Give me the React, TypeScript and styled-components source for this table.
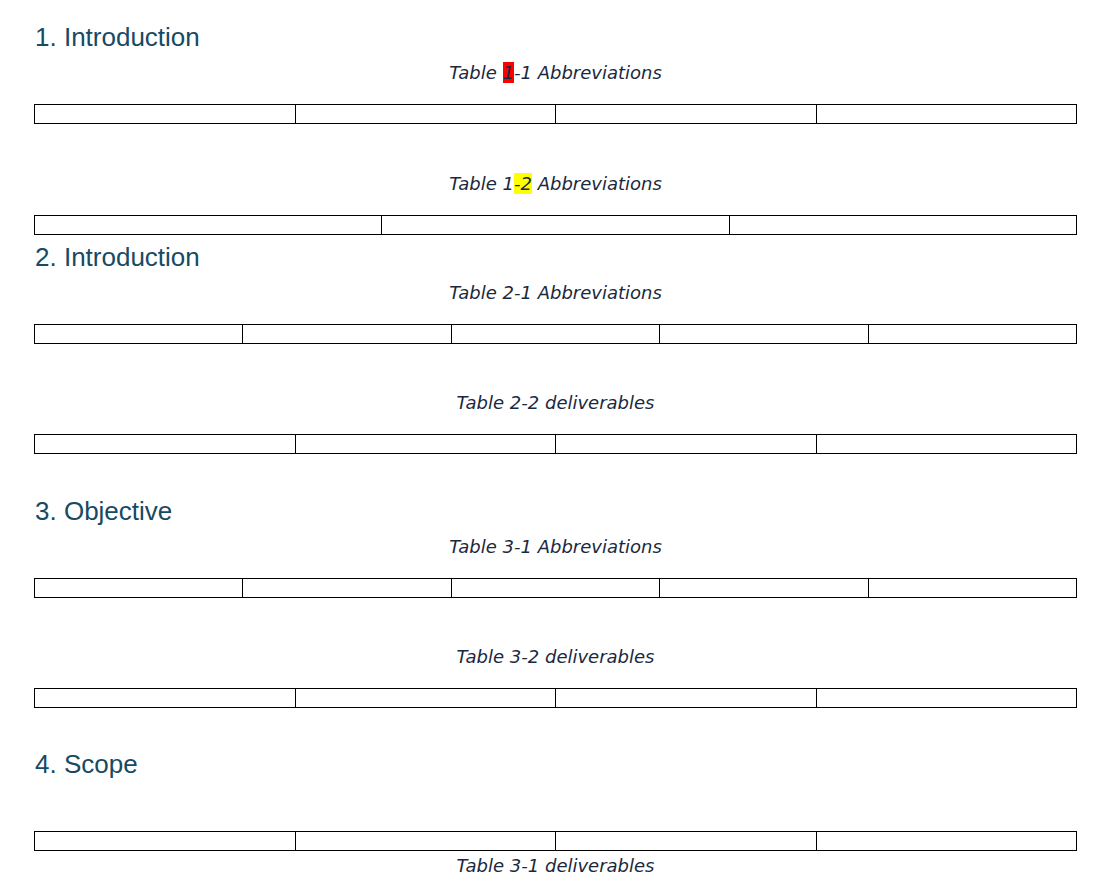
import React from "react";
import styled, { createGlobalStyle } from "styled-components";

const Global = createGlobalStyle`
  html, body { margin: 0; padding: 0; background: #ffffff; }
  body { overflow: hidden; }
`;

const Page = styled.div`
  width: 1043px;
  padding: 22px 0 0 34px;
  display: flex;
  flex-direction: column;
`;

const Heading = styled.h2<{ $top: number }>`
  margin: ${(p) => p.$top}px 0 0 1px;
  font-family: "Liberation Sans", Arial, sans-serif;
  font-weight: 400;
  font-size: 26px;
  line-height: 30px;
  height: 30px;
  color: #174a63;
`;

const Caption = styled.p<{ $top: number }>`
  margin: ${(p) => p.$top}px 0 0 0;
  font-family: "DejaVu Sans", "Liberation Sans", sans-serif;
  font-style: italic;
  font-size: 18px;
  line-height: 22px;
  height: 22px;
  text-align: center;
  color: #1a2940;
`;

const Mark = styled.span<{ $color: string }>`
  background: ${(p) => p.$color};
`;

const Grid = styled.div<{ $cols: number; $top: number }>`
  box-sizing: border-box;
  width: 1043px;
  margin-top: ${(p) => p.$top}px;
  display: grid;
  grid-template-columns: repeat(${(p) => p.$cols}, 1fr);
  border-top: 1px solid #000;
  border-left: 1px solid #000;
`;

const Cell = styled.div`
  height: 18px;
  border-right: 1px solid #000;
  border-bottom: 1px solid #000;
`;

const Table = ({ cols, top }: { cols: number; top: number }) => (
  <Grid $cols={cols} $top={top}>
    {Array.from({ length: cols }).map((_, i) => (
      <Cell key={i} />
    ))}
  </Grid>
);

export default function App() {
  return (
    <>
      <Global />
      <Page>
        <Heading $top={0}>1. Introduction</Heading>
        <Caption $top={10}>
          Table <Mark $color="#ff0000">1</Mark>-1 Abbreviations
        </Caption>
        <Table cols={4} top={20} />
        <Caption $top={49}>
          Table 1<Mark $color="#ffff00">-2</Mark> Abbreviations
        </Caption>
        <Table cols={3} top={20} />

        <Heading $top={7}>2. Introduction</Heading>
        <Caption $top={10}>Table 2-1 Abbreviations</Caption>
        <Table cols={5} top={20} />
        <Caption $top={48}>Table 2-2 deliverables</Caption>
        <Table cols={4} top={20} />

        <Heading $top={42}>3. Objective</Heading>
        <Caption $top={10}>Table 3-1 Abbreviations</Caption>
        <Table cols={5} top={20} />
        <Caption $top={48}>Table 3-2 deliverables</Caption>
        <Table cols={4} top={20} />

        <Heading $top={41}>4. Scope</Heading>
        <Table cols={4} top={52} />
        <Caption $top={4}>Table 3-1 deliverables</Caption>
      </Page>
    </>
  );
}
